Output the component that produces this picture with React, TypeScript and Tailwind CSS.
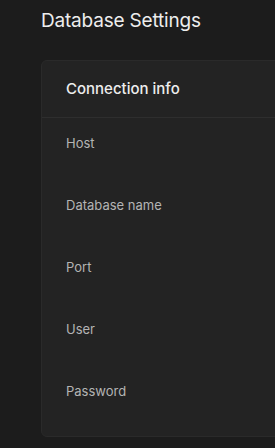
import React from 'react';

const fields = ['Host', 'Database name', 'Port', 'User', 'Password'];

const App = () => {
  return (
    <div
      className="h-[448px] w-full overflow-hidden bg-[#1c1c1c] px-[41px] pt-[7px]"
      style={{ fontFamily: 'Inter, "Noto Sans", sans-serif' }}
    >
      <h1 className="text-[19px] leading-7 font-normal text-[#ededed] tracking-[-0.01em]">Database Settings</h1>

      <div className="mt-[25px] w-[600px] rounded-md border border-[#2a2a2a] bg-[#232323]">
        <div className="border-b border-[#2e2e2e] px-6 h-[57px] flex items-center">
          <h2 className="text-[15px] font-medium text-[#ededed]">Connection info</h2>
        </div>
        <div className="flex flex-col gap-[42px] px-6 pt-4 pb-[34px]">
          {fields.map((f) => (
            <div key={f} className="h-5 flex items-center">
              <span className="text-[13px] text-[#b4b4b4]">{f}</span>
            </div>
          ))}
        </div>
      </div>
    </div>
  );
};

export default App;
